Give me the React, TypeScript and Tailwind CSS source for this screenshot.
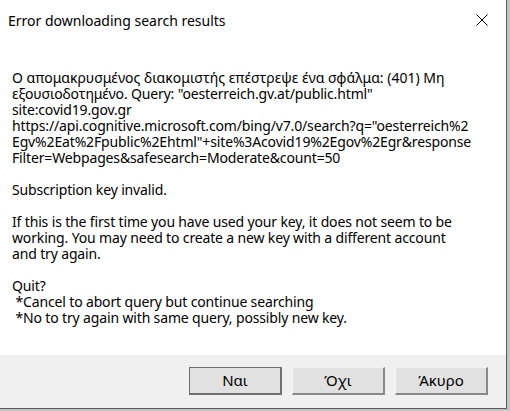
const lines: string[] = [
  'Ο απομακρυσμένος διακομιστής επέστρεψε ένα σφάλμα: (401) Μη',
  'εξουσιοδοτημένο. Query: "oesterreich.gv.at/public.html"',
  'site:covid19.gov.gr',
  'https://api.cognitive.microsoft.com/bing/v7.0/search?q="oesterreich%2',
  'Egv%2Eat%2Fpublic%2Ehtml"+site%3Acovid19%2Egov%2Egr&response',
  'Filter=Webpages&safesearch=Moderate&count=50',
  '',
  'Subscription key invalid.',
  '',
  'If this is the first time you have used your key, it does not seem to be',
  'working. You may need to create a new key with a different account',
  'and try again.',
  '',
  'Quit?',
  '\u00a0*Cancel to abort query but continue searching',
  '\u00a0*No to try again with same query, possibly new key.',
]

function DialogButton({ label, isDefault }: { label: string; isDefault?: boolean }) {
  return (
    <button
      className={
        isDefault
          ? 'h-[28px] w-[93px] border border-[#707070] border-b-2 border-r-2 bg-[#e1e1e1] text-[15px] text-black'
          : 'h-[28px] w-[93px] border border-t-[#f4f4f4] border-l-[#f4f4f4] border-r-2 border-b-2 border-r-[#8a8a8a] border-b-[#8a8a8a] bg-[#e1e1e1] text-[15px] text-black'
      }
    >
      {label}
    </button>
  )
}

export default function App() {
  return (
    <div
      className="flex h-[411px] w-[510px] flex-col bg-[#c4c4c4]"
      style={{ fontFamily: '"Noto Sans", "DejaVu Sans", sans-serif' }}
    >
      <div className="flex h-[409px] w-[507px] flex-col border-r border-b border-[#5a5a5a] bg-white">
        {/* Title bar */}
        <div className="flex h-[40px] items-center justify-between pl-[8px] pr-[18px]">
          <span className="text-[14px] text-black">Error downloading search results</span>
          <svg className="h-[12px] w-[12px]" viewBox="0 0 12 12" fill="none" stroke="#000" strokeWidth={1}>
            <path d="M0.5 0.5L11.5 11.5M11.5 0.5L0.5 11.5" />
          </svg>
        </div>

        {/* Message */}
        <div className="flex-1 px-[12px] pt-[30px] text-[14px] leading-[16px] text-black">
          {lines.map((line, i) => (
            <div
              key={i}
              className={i === 0 ? 'h-[16px] whitespace-pre' : 'h-[16px] whitespace-pre tracking-[-0.15px]'}
            >
              {line}
            </div>
          ))}
        </div>

        {/* Footer */}
        <div className="flex h-[53px] items-start justify-end gap-[10px] bg-[#f0f0f0] pr-[18px] pt-[12px]">
          <DialogButton label="Ναι" isDefault />
          <DialogButton label="Όχι" />
          <DialogButton label="Άκυρο" />
        </div>
      </div>
    </div>
  )
}
